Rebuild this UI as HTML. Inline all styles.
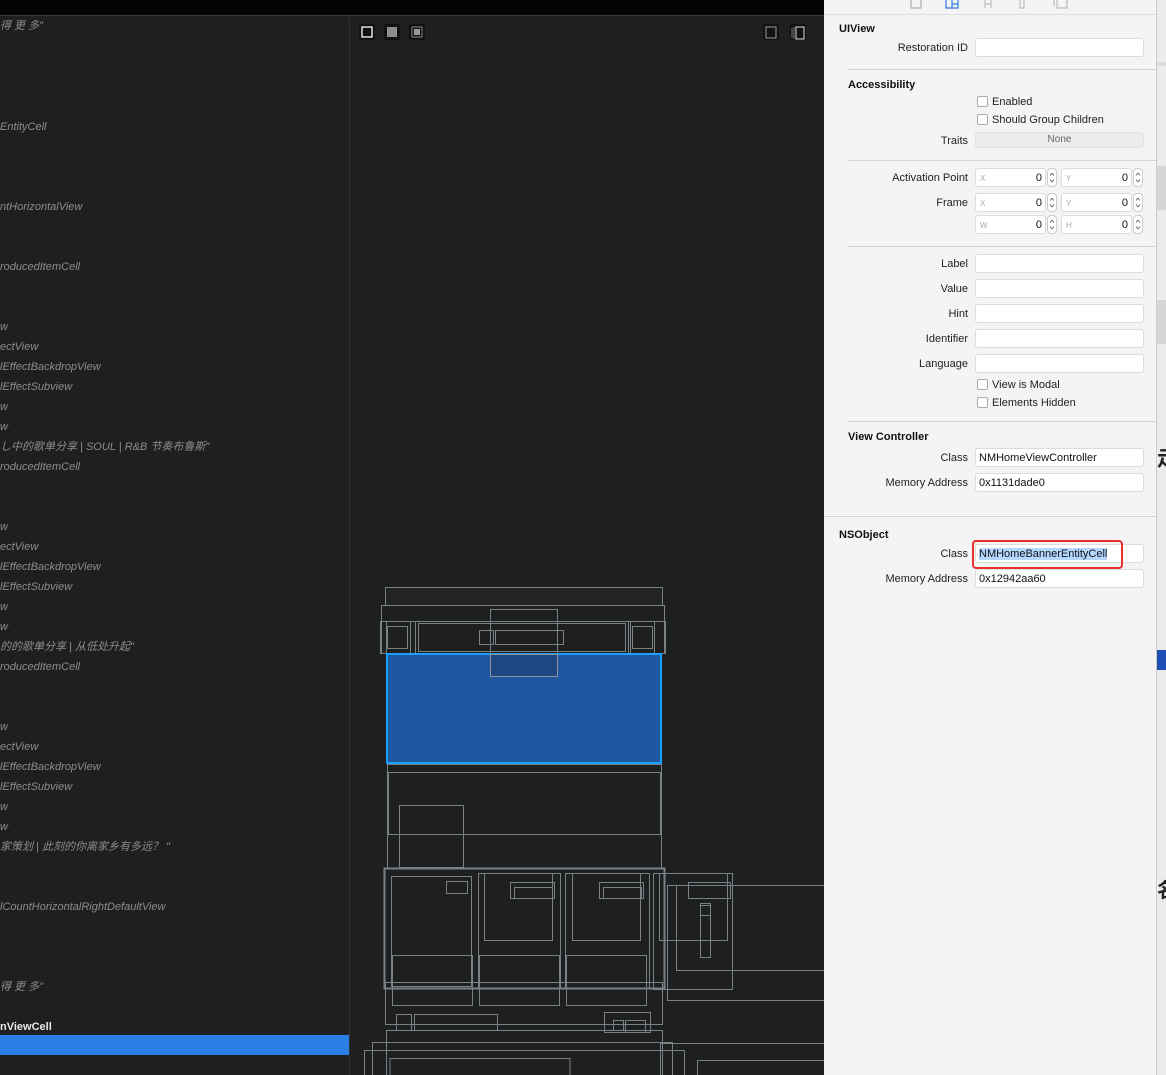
<!DOCTYPE html>
<html><head><meta charset="utf-8">
<style>
*{margin:0;padding:0;box-sizing:border-box}
body{width:1166px;height:1075px;overflow:hidden;background:#1e1f21;position:relative;font-family:"Liberation Sans","Noto Sans CJK SC",sans-serif}
.abs{position:absolute}
.lt{position:absolute;left:0;font-size:11px;font-style:italic;color:#8b8c8e;white-space:nowrap;line-height:14px;margin-top:2px}
.ins{position:absolute;left:824px;top:0;width:332px;height:1075px;background:#f4f4f4}
.lbl{position:absolute;font-size:11px;color:#222;text-align:right;width:200px;line-height:13px;white-space:nowrap;margin-top:1px}
.fld{position:absolute;background:#fff;border:1px solid #dcdcdc;border-radius:3px;height:19px;font-size:11px;color:#111;padding-left:3px;line-height:19px;white-space:nowrap}
.hdr{position:absolute;font-size:11px;font-weight:bold;color:#111;margin-top:1px}
.sep{position:absolute;height:1px;background:#d3d3d3}
.cb{position:absolute;width:11px;height:11px;border:1px solid #aaa;border-radius:2px;background:#fff}
.cbt{position:absolute;font-size:11px;color:#222;line-height:13px;white-space:nowrap}
.num{position:absolute;height:19px;background:#fff;border:1px solid #dcdcdc;border-radius:3px;font-size:11px;line-height:19px}
.num .p{position:absolute;left:4px;font-size:8px;color:#aaa}
.num .v{position:absolute;right:3px;color:#111}
.st{position:absolute;width:10px;height:19px;border:1px solid #ccc;border-radius:4px;background:#fff}
</style></head><body>
<div class="abs" style="left:0;top:0;width:824px;height:16px;background:#040404;border-bottom:1px solid #3a3a3c"></div>
<div class="abs" style="left:349px;top:17px;width:1px;height:1058px;background:#2f3033"></div>

<div class="lt" style="top:17px">得 更 多"</div>
<div class="lt" style="top:118px">EntityCell</div>
<div class="lt" style="top:198px">ntHorizontalView</div>
<div class="lt" style="top:258px">roducedItemCell</div>
<div class="lt" style="top:318px">w</div>
<div class="lt" style="top:338px">ectView</div>
<div class="lt" style="top:358px">lEffectBackdropView</div>
<div class="lt" style="top:378px">lEffectSubview</div>
<div class="lt" style="top:398px">w</div>
<div class="lt" style="top:418px">w</div>
<div class="lt" style="top:438px">し中的歌单分享 | SOUL | R&amp;B 节奏布鲁斯"</div>
<div class="lt" style="top:458px">roducedItemCell</div>
<div class="lt" style="top:518px">w</div>
<div class="lt" style="top:538px">ectView</div>
<div class="lt" style="top:558px">lEffectBackdropView</div>
<div class="lt" style="top:578px">lEffectSubview</div>
<div class="lt" style="top:598px">w</div>
<div class="lt" style="top:618px">w</div>
<div class="lt" style="top:638px">的的歌单分享 | 从低处升起"</div>
<div class="lt" style="top:658px">roducedItemCell</div>
<div class="lt" style="top:718px">w</div>
<div class="lt" style="top:738px">ectView</div>
<div class="lt" style="top:758px">lEffectBackdropView</div>
<div class="lt" style="top:778px">lEffectSubview</div>
<div class="lt" style="top:798px">w</div>
<div class="lt" style="top:818px">w</div>
<div class="lt" style="top:838px">家策划 | 此刻的你离家乡有多远？ "</div>
<div class="lt" style="top:898px">lCountHorizontalRightDefaultView</div>
<div class="lt" style="top:978px">得 更 多"</div>
<div class="lt" style="top:1018px;font-style:normal;font-weight:bold;color:#e8e8e8">nViewCell</div>
<div class="abs" style="left:0;top:1035px;width:349px;height:20px;background:#2a7fe4"></div>

<svg class="abs" style="left:350px;top:17px" width="474" height="40">
<rect x="9" y="7" width="16" height="16" rx="2" fill="#111214"/>
<rect x="12" y="10" width="10" height="10" fill="none" stroke="#fff" stroke-width="1.3"/>
<rect x="34" y="7" width="16" height="16" rx="2" fill="#111214"/>
<rect x="37" y="10" width="10" height="10" fill="#8e8e8e"/>
<rect x="59" y="7" width="16" height="16" rx="2" fill="#111214"/>
<rect x="62" y="10" width="10" height="10" fill="none" stroke="#888"/>
<rect x="64" y="12" width="6" height="6" fill="#999"/>
<rect x="413" y="7" width="16" height="16" rx="2" fill="#111214"/>
<rect x="416" y="10" width="10" height="11" fill="none" stroke="#999"/>
<rect x="440" y="7" width="16" height="16" rx="2" fill="#111214"/>
<path d="M442 11v10M444 10v12" stroke="#777"/>
<rect x="446" y="10" width="8" height="12" fill="none" stroke="#ddd"/>
</svg>

<svg class="abs" style="left:0;top:0" width="824" height="1075">
<g fill="none" stroke="#8c9194" stroke-width="1" opacity="0.85">
<rect x="385.5" y="587.5" width="277" height="18" fill="#232426"/>
<rect x="381.5" y="605.5" width="283" height="48"/>
<rect x="380.5" y="621.5" width="285" height="32"/>
<rect x="386.5" y="621.5" width="24" height="32"/>
<rect x="387.5" y="626.5" width="20" height="22"/>
<rect x="415.5" y="621.5" width="213" height="32"/>
<rect x="418.5" y="623.5" width="207" height="28"/>
<rect x="479.5" y="630.5" width="14" height="14"/>
<rect x="495.5" y="630.5" width="68" height="14"/>
<rect x="630.5" y="621.5" width="24" height="32"/>
<rect x="632.5" y="626.5" width="20" height="22"/>
<rect x="490.5" y="609.5" width="67" height="67"/>
<rect x="387.5" y="764.5" width="274" height="70"/>
<rect x="388.5" y="772.5" width="272" height="62"/>
<rect x="399.5" y="805.5" width="64" height="62"/>
<rect x="387.5" y="834.5" width="274" height="34"/>
<rect x="384.5" y="868.5" width="280" height="120" stroke-width="2"/>
<rect x="391.5" y="876.5" width="80" height="110"/>
<rect x="446.5" y="881.5" width="21" height="12"/>
<rect x="478.5" y="873.5" width="82" height="115"/>
<rect x="484.5" y="873.5" width="68" height="67"/>
<rect x="510.5" y="882.5" width="44" height="16"/>
<rect x="514.5" y="887.5" width="38" height="11"/>
<rect x="565.5" y="873.5" width="84" height="115"/>
<rect x="572.5" y="873.5" width="68" height="67"/>
<rect x="599.5" y="882.5" width="44" height="16"/>
<rect x="603.5" y="887.5" width="38" height="11"/>
<rect x="392.5" y="955.5" width="80" height="50"/>
<rect x="479.5" y="955.5" width="80" height="50"/>
<rect x="566.5" y="955.5" width="80" height="50"/>
<rect x="653.5" y="873.5" width="79" height="116"/>
<rect x="659.5" y="873.5" width="68" height="67"/>
<rect x="667.5" y="885.5" width="160" height="115"/>
<rect x="676.5" y="885.5" width="150" height="85"/>
<rect x="688.5" y="882.5" width="42" height="16"/>
<rect x="700.5" y="903.5" width="10" height="54"/>
<rect x="700.5" y="905.5" width="10" height="10"/>
<rect x="385.5" y="982.5" width="277" height="42"/>
<rect x="396.5" y="1014.5" width="15" height="16"/>
<rect x="414.5" y="1014.5" width="83" height="16"/>
<rect x="604.5" y="1012.5" width="46" height="20"/>
<rect x="613.5" y="1020.5" width="10" height="10"/>
<rect x="625.5" y="1020.5" width="20" height="12"/>
<rect x="386.5" y="1030.5" width="276" height="50"/>
<rect x="372.5" y="1042.5" width="300" height="40"/>
<rect x="364.5" y="1050.5" width="320" height="40"/>
<rect x="660.5" y="1043.5" width="170" height="40"/>
<rect x="697.5" y="1060.5" width="130" height="30"/>
<rect x="390" y="1058.5" width="180" height="20"/>
</g>
<rect x="387" y="654" width="274" height="109" fill="#1f56a0" stroke="#19a1ff" stroke-width="2"/>
<rect x="490.5" y="654.5" width="67" height="22" fill="#1e4784" stroke="#8c9194"/>
</svg>

<div class="abs" style="left:1156px;top:0;width:10px;height:1075px;background:#ececec;border-left:1px solid #ccc"></div>
<div class="abs" style="left:1157px;top:62px;width:9px;height:4px;background:#ddd"></div>
<div class="abs" style="left:1157px;top:166px;width:9px;height:44px;background:#d6d6d6"></div>
<div class="abs" style="left:1157px;top:300px;width:9px;height:44px;background:#d6d6d6"></div>
<div class="abs" style="left:1157px;top:650px;width:9px;height:20px;background:#1f4fb5"></div>
<div class="abs" style="left:1157px;top:448px;font-size:22px;font-weight:bold;color:#222;line-height:22px">走</div>
<div class="abs" style="left:1157px;top:880px;font-size:20px;font-weight:bold;color:#222;line-height:22px">名</div>

<div class="ins">
<div class="sep" style="left:0;top:14px;width:332px;background:#ddd"></div>
<svg class="abs" style="left:80px;top:0" width="180" height="12">
<path d="M7 0v8h10V0" fill="none" stroke="#aaa" stroke-width="1.2"/>
<path d="M42 0v8h12V0M48 0v8M48 4h6" fill="none" stroke="#2a7be4" stroke-width="1.2"/>
<path d="M81 0v8M87 0v8M82 4h4" fill="none" stroke="#bbb" stroke-width="1.2"/>
<path d="M116 0v8h4V0" fill="none" stroke="#bbb" stroke-width="1.2"/>
<path d="M153 0v8h10V0M150 0v6" fill="none" stroke="#bbb" stroke-width="1.2"/>
</svg>
<div class="hdr" style="left:15px;top:22px">UIView</div>
<div class="lbl" style="left:-56px;top:41px">Restoration ID</div>
<div class="fld" style="left:151px;top:38px;width:169px"></div>
<div class="sep" style="left:24px;top:69px;width:308px"></div>
<div class="hdr" style="left:24px;top:78px">Accessibility</div>
<div class="cb" style="left:153px;top:96px"></div><div class="cbt" style="left:168px;top:96px">Enabled</div>
<div class="cb" style="left:153px;top:114px"></div><div class="cbt" style="left:168px;top:114px">Should Group Children</div>
<div class="lbl" style="left:-56px;top:134px">Traits</div>
<div class="abs" style="left:151px;top:132px;width:169px;height:16px;background:#ececec;border:1px solid #e2e2e2;border-radius:3px;font-size:10px;color:#666;text-align:center;line-height:14px">None</div>
<div class="sep" style="left:24px;top:160px;width:308px"></div>
<div class="lbl" style="left:-56px;top:171px">Activation Point</div>
<div class="num" style="left:151px;top:168px;width:71px"><span class="p">X</span><span class="v">0</span></div><svg class="st" style="left:223px;top:168px" viewBox="0 0 10 19"><path d="M2.5 7l2.5-3 2.5 3M2.5 12l2.5 3 2.5-3" fill="none" stroke="#555"/></svg>
<div class="num" style="left:237px;top:168px;width:71px"><span class="p">Y</span><span class="v">0</span></div><svg class="st" style="left:309px;top:168px" viewBox="0 0 10 19"><path d="M2.5 7l2.5-3 2.5 3M2.5 12l2.5 3 2.5-3" fill="none" stroke="#555"/></svg>
<div class="lbl" style="left:-56px;top:196px">Frame</div>
<div class="num" style="left:151px;top:193px;width:71px"><span class="p">X</span><span class="v">0</span></div><svg class="st" style="left:223px;top:193px" viewBox="0 0 10 19"><path d="M2.5 7l2.5-3 2.5 3M2.5 12l2.5 3 2.5-3" fill="none" stroke="#555"/></svg>
<div class="num" style="left:237px;top:193px;width:71px"><span class="p">Y</span><span class="v">0</span></div><svg class="st" style="left:309px;top:193px" viewBox="0 0 10 19"><path d="M2.5 7l2.5-3 2.5 3M2.5 12l2.5 3 2.5-3" fill="none" stroke="#555"/></svg>
<div class="num" style="left:151px;top:215px;width:71px"><span class="p">W</span><span class="v">0</span></div><svg class="st" style="left:223px;top:215px" viewBox="0 0 10 19"><path d="M2.5 7l2.5-3 2.5 3M2.5 12l2.5 3 2.5-3" fill="none" stroke="#555"/></svg>
<div class="num" style="left:237px;top:215px;width:71px"><span class="p">H</span><span class="v">0</span></div><svg class="st" style="left:309px;top:215px" viewBox="0 0 10 19"><path d="M2.5 7l2.5-3 2.5 3M2.5 12l2.5 3 2.5-3" fill="none" stroke="#555"/></svg>
<div class="sep" style="left:24px;top:246px;width:308px"></div>
<div class="lbl" style="left:-56px;top:257px">Label</div><div class="fld" style="left:151px;top:254px;width:169px"></div>
<div class="lbl" style="left:-56px;top:282px">Value</div><div class="fld" style="left:151px;top:279px;width:169px"></div>
<div class="lbl" style="left:-56px;top:307px">Hint</div><div class="fld" style="left:151px;top:304px;width:169px"></div>
<div class="lbl" style="left:-56px;top:332px">Identifier</div><div class="fld" style="left:151px;top:329px;width:169px"></div>
<div class="lbl" style="left:-56px;top:357px">Language</div><div class="fld" style="left:151px;top:354px;width:169px"></div>
<div class="cb" style="left:153px;top:379px"></div><div class="cbt" style="left:168px;top:379px">View is Modal</div>
<div class="cb" style="left:153px;top:397px"></div><div class="cbt" style="left:168px;top:397px">Elements Hidden</div>
<div class="sep" style="left:24px;top:421px;width:308px"></div>
<div class="hdr" style="left:24px;top:430px">View Controller</div>
<div class="lbl" style="left:-56px;top:451px">Class</div><div class="fld" style="left:151px;top:448px;width:169px">NMHomeViewController</div>
<div class="lbl" style="left:-56px;top:476px">Memory Address</div><div class="fld" style="left:151px;top:473px;width:169px">0x1131dade0</div>
<div class="sep" style="left:0;top:516px;width:332px"></div>
<div class="hdr" style="left:15px;top:528px">NSObject</div>
<div class="lbl" style="left:-56px;top:547px">Class</div><div class="fld" style="left:151px;top:544px;width:169px"><span style="background:#b3d7ff">NMHomeBannerEntityCell</span></div>
<div class="abs" style="left:148px;top:540px;width:151px;height:29px;border:2px solid #e8312d;border-radius:4px"></div>
<div class="lbl" style="left:-56px;top:572px">Memory Address</div><div class="fld" style="left:151px;top:569px;width:169px">0x12942aa60</div>
</div>
</body></html>
